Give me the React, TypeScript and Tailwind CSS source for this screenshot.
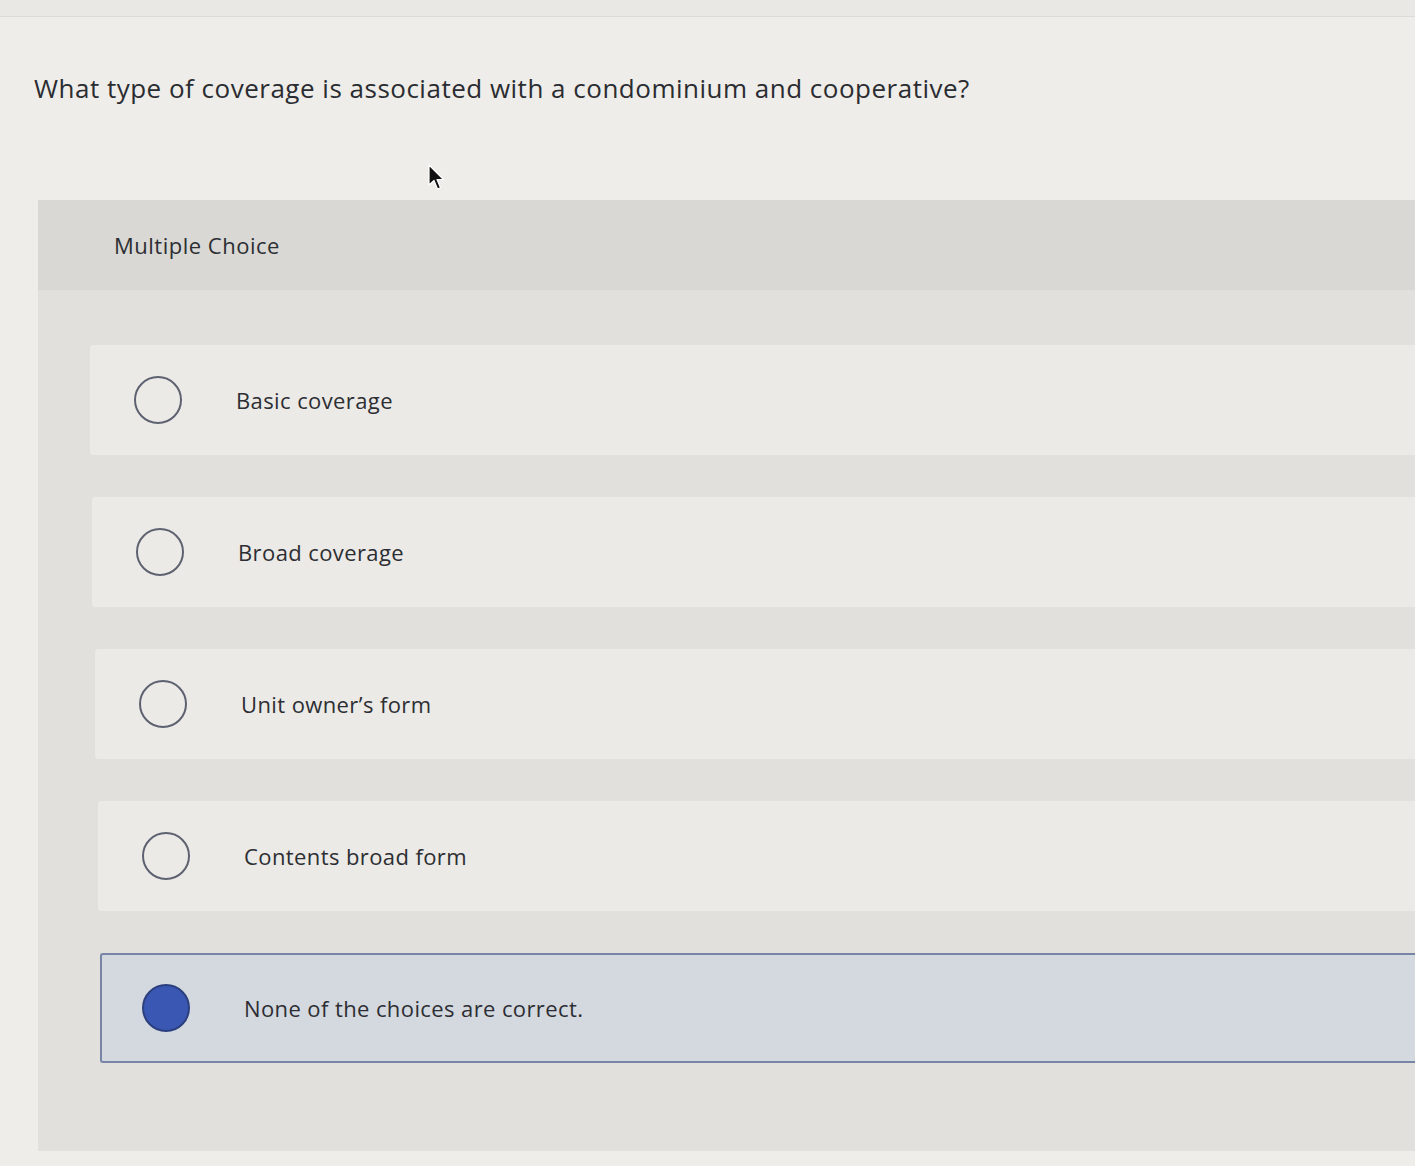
type Choice = {
  label: string;
  selected?: boolean;
  indent: string;
};

const CHOICES: Choice[] = [
  { label: "Basic coverage", indent: "ml-[52px]" },
  { label: "Broad coverage", indent: "ml-[54px]" },
  { label: "Unit owner\u2019s form", indent: "ml-[57px]" },
  { label: "Contents broad form", indent: "ml-[60px]" },
  { label: "None of the choices are correct.", selected: true, indent: "ml-[62px]" },
];

function Radio({ selected }: { selected?: boolean }) {
  if (selected) {
    return (
      <span className="block h-[48px] w-[48px] shrink-0 rounded-full border-2 border-[#2c3f7e] bg-[#3957b3]" />
    );
  }
  return (
    <span className="block h-[48px] w-[48px] shrink-0 rounded-full border-2 border-[#5e6270] bg-transparent" />
  );
}

function ChoiceRow({ choice }: { choice: Choice }) {
  return (
    <div
      className={`${choice.indent} flex h-[110px] items-center rounded-l-[3px] ${
        choice.selected
          ? "border-y-2 border-l-2 border-[#7884a6] bg-[#d4d8df] pl-[40px]"
          : "bg-[#ebeae6] pl-[44px]"
      }`}
    >
      <Radio selected={choice.selected} />
      <span className="ml-[54px] text-[22px] leading-none tracking-[0.4px] text-[#2d2e33]">
        {choice.label}
      </span>
    </div>
  );
}

export default function App() {
  return (
    <div
      className="relative min-h-[1166px] w-full overflow-hidden bg-[#eeede9]"
      style={{ fontFamily: '"Open Sans", "Liberation Sans", sans-serif' }}
    >
      {/* top strip */}
      <div className="h-[17px] border-b border-[#dcdbd7] bg-[#e9e8e4]" />

      {/* question */}
      <h1 className="pl-[34px] pt-[54px] text-[26px] font-normal leading-[34px] tracking-[0.5px] text-[#2b2c31]">
        What type of coverage is associated with a condominium and cooperative?
      </h1>

      {/* answer panel */}
      <div className="ml-[38px] mt-[95px] bg-[#e1e0dc] pb-[88px]">
        <div className="flex h-[90px] items-center bg-[#d9d8d4] pl-[76px]">
          <span className="text-[22px] leading-none tracking-[0.5px] text-[#2d2e33]">Multiple Choice</span>
        </div>
        <div className="flex flex-col gap-[42px] pt-[55px]">
          {CHOICES.map((c) => (
            <ChoiceRow key={c.label} choice={c} />
          ))}
        </div>
      </div>

      {/* mouse cursor */}
      <svg
        className="absolute left-[428px] top-[164px]"
        width="18"
        height="28"
        viewBox="0 0 18 28"
      >
        <path
          d="M1 1 L1 21 L6 16.5 L9.5 25 L12.5 23.8 L9 15.5 L15.5 15.5 Z"
          fill="#111"
          stroke="#fff"
          strokeWidth="1.2"
          strokeLinejoin="round"
        />
      </svg>
    </div>
  );
}
